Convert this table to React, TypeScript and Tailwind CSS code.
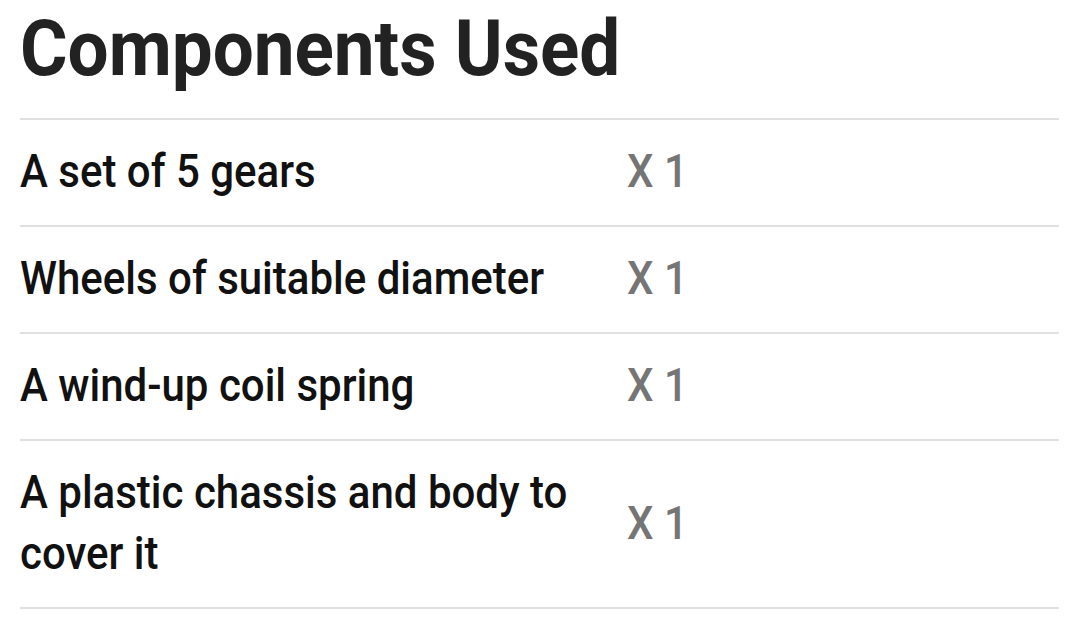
const items = [
  { name: "A set of 5 gears", qty: "X 1" },
  { name: "Wheels of suitable diameter", qty: "X 1" },
  { name: "A wind-up coil spring", qty: "X 1" },
  { name: "A plastic chassis and body to cover it", qty: "X 1" },
];

export default function App() {
  return (
    <div className="min-h-screen bg-white px-[20px] font-['Roboto',sans-serif]">
      <h1 className="origin-left scale-x-[0.945] pt-[4px] pb-[24px] text-[77px] font-bold leading-[90px] whitespace-nowrap text-[#222]">
        Components Used
      </h1>
      <div className="border-t-2 border-[#e0e0e0]">
        {items.map((it) => (
          <div
            key={it.name}
            className="flex items-center border-b-2 border-[#e0e0e0] pt-[21px] pb-[23px]"
          >
            <div className="w-[607px] shrink-0">
              <div className="w-[650px] origin-left scale-x-[0.913] text-[46px] font-medium leading-[61px] text-[#111]">
                {it.name}
              </div>
            </div>
            <div className="origin-left scale-x-[0.913] text-[46px] font-medium leading-[61px] text-[#757575]">
              {it.qty}
            </div>
          </div>
        ))}
      </div>
    </div>
  );
}
